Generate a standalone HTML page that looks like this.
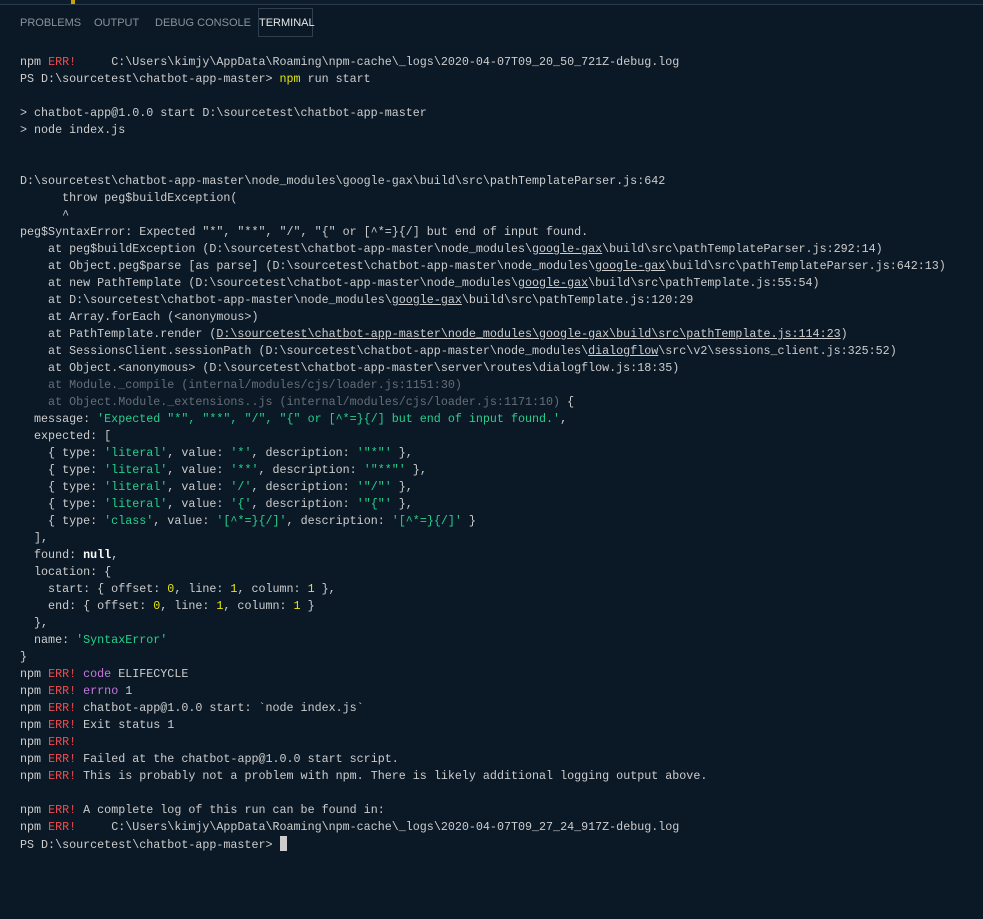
<!DOCTYPE html>
<html><head><meta charset="utf-8"><style>
html,body{margin:0;padding:0;background:#0b1927;width:983px;height:919px;overflow:hidden}
.top{position:absolute;left:0;top:0;width:983px;height:4px;background:#0d1d2c;border-bottom:1px solid #2a3a4a}
.tabs{position:absolute;top:8px;left:0;height:29px;font-family:"Liberation Sans",sans-serif;font-size:11px;color:#8a929a}
.tab{position:absolute;top:9px;white-space:nowrap}
.term{position:absolute;left:258px;top:0;width:55px;height:29px;border:1px solid #2f3f4f;box-sizing:border-box;color:#e7e7e7;text-align:center;line-height:29px;font-size:11px}
pre{position:absolute;left:20px;top:54px;margin:0;font-family:"Liberation Mono",monospace;font-size:11.7px;line-height:17px;color:#cccccc;white-space:pre}
.r{color:#f14c4c}.y{color:#e5e510}.g{color:#23d18b}.m{color:#c678dd}.d{color:#666e76}.w{color:#fff;font-weight:bold}
u{text-decoration:underline}
.cur{display:inline-block;width:7px;height:15px;background:#cccccc;vertical-align:-3px}
</style></head><body>
<div class="top"></div>
<div style="position:absolute;left:71px;top:0;width:4px;height:4px;background:#c9a400"></div>
<div class="tabs">
<span class="tab" style="left:20px">PROBLEMS</span>
<span class="tab" style="left:94px">OUTPUT</span>
<span class="tab" style="left:155px">DEBUG CONSOLE</span>
<div class="term">TERMINAL</div>
</div>
<pre>npm <span class="r">ERR!</span>     C:\Users\kimjy\AppData\Roaming\npm-cache\_logs\2020-04-07T09_20_50_721Z-debug.log
PS D:\sourcetest\chatbot-app-master&gt; <span class="y">npm</span> run start

&gt; chatbot-app@1.0.0 start D:\sourcetest\chatbot-app-master
&gt; node index.js


D:\sourcetest\chatbot-app-master\node_modules\google-gax\build\src\pathTemplateParser.js:642
      throw peg$buildException(
      ^
peg$SyntaxError: Expected "*", "**", "/", "{" or [^*=}{/] but end of input found.
    at peg$buildException (D:\sourcetest\chatbot-app-master\node_modules\<u>google-gax</u>\build\src\pathTemplateParser.js:292:14)
    at Object.peg$parse [as parse] (D:\sourcetest\chatbot-app-master\node_modules\<u>google-gax</u>\build\src\pathTemplateParser.js:642:13)
    at new PathTemplate (D:\sourcetest\chatbot-app-master\node_modules\<u>google-gax</u>\build\src\pathTemplate.js:55:54)
    at D:\sourcetest\chatbot-app-master\node_modules\<u>google-gax</u>\build\src\pathTemplate.js:120:29
    at Array.forEach (&lt;anonymous&gt;)
    at PathTemplate.render (<u>D:\sourcetest\chatbot-app-master\node_modules\google-gax\build\src\pathTemplate.js:114:23</u>)
    at SessionsClient.sessionPath (D:\sourcetest\chatbot-app-master\node_modules\<u>dialogflow</u>\src\v2\sessions_client.js:325:52)
    at Object.&lt;anonymous&gt; (D:\sourcetest\chatbot-app-master\server\routes\dialogflow.js:18:35)
<span class="d">    at Module._compile (internal/modules/cjs/loader.js:1151:30)</span>
<span class="d">    at Object.Module._extensions..js (internal/modules/cjs/loader.js:1171:10)</span> {
  message: <span class="g">'Expected "*", "**", "/", "{" or [^*=}{/] but end of input found.'</span>,
  expected: [
    { type: <span class="g">'literal'</span>, value: <span class="g">'*'</span>, description: <span class="g">'"*"'</span> },
    { type: <span class="g">'literal'</span>, value: <span class="g">'**'</span>, description: <span class="g">'"**"'</span> },
    { type: <span class="g">'literal'</span>, value: <span class="g">'/'</span>, description: <span class="g">'"/"'</span> },
    { type: <span class="g">'literal'</span>, value: <span class="g">'{'</span>, description: <span class="g">'"{"'</span> },
    { type: <span class="g">'class'</span>, value: <span class="g">'[^*=}{/]'</span>, description: <span class="g">'[^*=}{/]'</span> }
  ],
  found: <span class="w">null</span>,
  location: {
    start: { offset: <span class="y">0</span>, line: <span class="y">1</span>, column: <span class="y">1</span> },
    end: { offset: <span class="y">0</span>, line: <span class="y">1</span>, column: <span class="y">1</span> }
  },
  name: <span class="g">'SyntaxError'</span>
}
npm <span class="r">ERR!</span> <span class="m">code</span> ELIFECYCLE
npm <span class="r">ERR!</span> <span class="m">errno</span> 1
npm <span class="r">ERR!</span> chatbot-app@1.0.0 start: `node index.js`
npm <span class="r">ERR!</span> Exit status 1
npm <span class="r">ERR!</span>
npm <span class="r">ERR!</span> Failed at the chatbot-app@1.0.0 start script.
npm <span class="r">ERR!</span> This is probably not a problem with npm. There is likely additional logging output above.

npm <span class="r">ERR!</span> A complete log of this run can be found in:
npm <span class="r">ERR!</span>     C:\Users\kimjy\AppData\Roaming\npm-cache\_logs\2020-04-07T09_27_24_917Z-debug.log
PS D:\sourcetest\chatbot-app-master&gt; <span class="cur"></span></pre>
</body></html>
